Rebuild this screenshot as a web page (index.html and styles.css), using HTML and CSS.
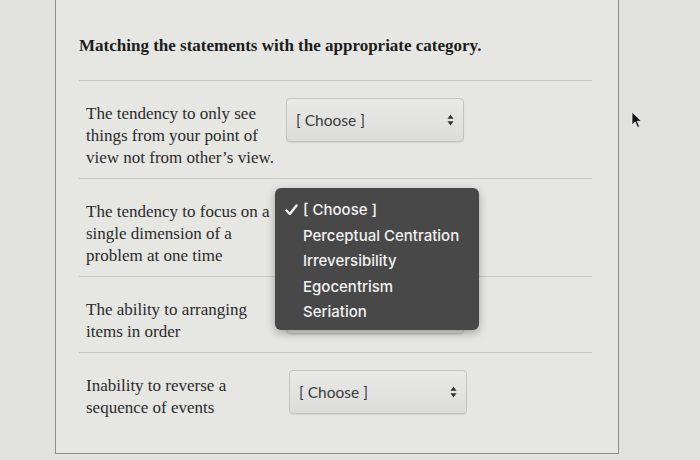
FILE: index.html
```html
<!DOCTYPE html>
<html lang="en">

<head>
  <meta charset="UTF-8">
  <title>Matching Question</title>
  <link rel="stylesheet" href="styles.css">
</head>

<body>
  <div class="page">
    <div class="card">
      <div class="question-title">Matching the statements with the appropriate category.</div>

      <div class="answers">
        <div class="answer-row">
          <div class="answer-label">The tendency to only see things from your point of view not from other’s view.</div>
          <div class="select">
            <span>[ Choose ]</span>
            <svg class="arrows" width="7" height="12" viewBox="0 0 7 12"><path d="M3.5 0.5 L6.5 4.8 L0.5 4.8 Z M3.5 11.5 L6.5 7.2 L0.5 7.2 Z" fill="#333"/></svg>
          </div>
        </div>

        <div class="answer-row">
          <div class="answer-label">The tendency to focus on a single dimension of a problem at one time</div>
          <!-- covered by the open menu -->
          <div class="select covered">
            <span>[ Choose ]</span>
          </div>
        </div>

        <div class="answer-row">
          <div class="answer-label">The ability to arranging items in order</div>
          <div class="select covered">
            <span>[ Choose ]</span>
          </div>
        </div>

        <div class="answer-row">
          <div class="answer-label">Inability to reverse a sequence of events</div>
          <div class="select shifted">
            <span>[ Choose ]</span>
            <svg class="arrows" width="7" height="12" viewBox="0 0 7 12"><path d="M3.5 0.5 L6.5 4.8 L0.5 4.8 Z M3.5 11.5 L6.5 7.2 L0.5 7.2 Z" fill="#333"/></svg>
          </div>
        </div>
      </div>

      <!-- open popup menu of the second select -->
      <ul class="menu">
        <li class="selected">
          <svg class="check" width="13" height="12" viewBox="0 0 13 12"><path d="M1.5 6.5 L4.8 10 L11.5 1.5" fill="none" stroke="#f2f2f2" stroke-width="2.4" stroke-linecap="round" stroke-linejoin="round"/></svg>
          [ Choose ]
        </li>
        <li>Perceptual Centration</li>
        <li>Irreversibility</li>
        <li>Egocentrism</li>
        <li>Seriation</li>
      </ul>
    </div>

    <svg class="cursor" width="12" height="18" viewBox="0 0 12 18"><path d="M1 1 L1 14 L4.2 11 L6.6 16.5 L8.6 15.6 L6.2 10.3 L10.5 10.3 Z" fill="#111" stroke="#eee" stroke-width="0.8"/></svg>
  </div>
</body>

</html>
```

FILE: styles.css
```css
body {
  margin: 0;
  padding: 0;
  background-color: #e1e1de;
  font-family: "Liberation Serif", "Times New Roman", serif;
  color: #2b2b2b;
}

.page {
  position: relative;
  width: 700px;
  height: 460px;
  overflow: hidden;
}

.card {
  position: relative;
  margin-left: 55px;
  width: 564px;
  box-sizing: border-box;
  padding: 35px 26px 25px 23px;
  background-color: #e6e6e3;
  border: 1px solid #8e8e8c;
  border-top: none;
}

.question-title {
  font-size: 17px;
  font-weight: bold;
  line-height: 22px;
  color: #1c1c1c;
  margin-bottom: 23px;
}

.answer-row {
  display: flex;
  align-items: flex-start;
  border-top: 1px solid #c9c9c6;
  padding: 17px 0 9px 7px;
}

.answer-label {
  width: 192px;
  margin-right: 8px;
  padding-top: 5px;
  font-size: 17px;
  line-height: 22px;
}

.select {
  width: 178px;
  height: 44px;
  box-sizing: border-box;
  display: flex;
  align-items: center;
  justify-content: space-between;
  padding: 0 9px 0 9px;
  background: linear-gradient(#e9e9e7, #dcdcda);
  border: 1px solid #c3c3c1;
  border-radius: 4px;
  box-shadow: 0 1px 1px rgba(0, 0, 0, 0.08);
  font-family: Lato, "Liberation Sans", sans-serif;
  font-size: 15.5px;
  color: #3b3b3b;
}

.select.shifted {
  margin-left: 3px;
}

.select.covered {
  margin-top: -4px;
}

.select.covered span {
  visibility: hidden;
}

.arrows {
  display: block;
}

.menu {
  position: absolute;
  left: 219px;
  top: 188px;
  width: 204px;
  height: 142px;
  box-sizing: border-box;
  margin: 0;
  padding: 9px 0 5px 0;
  list-style: none;
  background-color: #484848;
  border-radius: 6px;
  box-shadow: 0 3px 10px rgba(0, 0, 0, 0.3);
  font-family: Inter, "Noto Sans", sans-serif;
  font-size: 15px;
  font-weight: 500;
  color: #f2f2f2;
}

.menu li {
  position: relative;
  height: 25.5px;
  line-height: 25.5px;
  padding-left: 28px;
}

.check {
  position: absolute;
  left: 10px;
  top: 7px;
}

.cursor {
  position: absolute;
  left: 631px;
  top: 111px;
}
```
